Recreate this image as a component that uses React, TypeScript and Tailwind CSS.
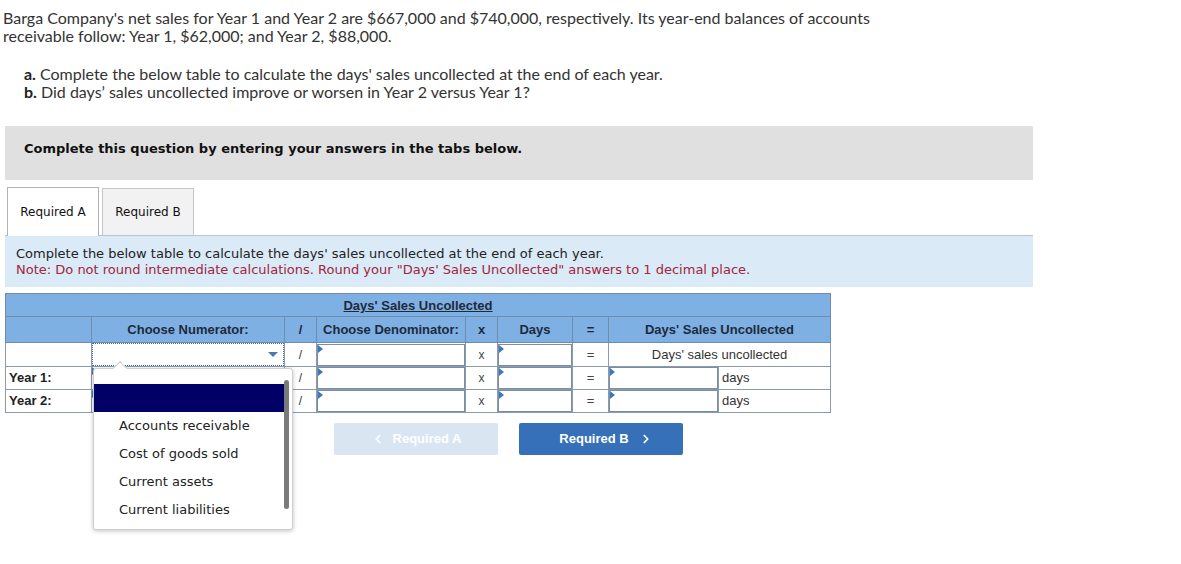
import { ChevronLeft, ChevronRight } from "lucide-react";

const SANS = "font-['Lato','Open_Sans',sans-serif]";
const VERD = "font-['DejaVu_Sans','Verdana',sans-serif]";
const ARIAL = "font-['Liberation_Sans','Arial',sans-serif]";

// little blue flag in the corner of an answer box
function Flag() {
  return (
    <span className="absolute left-0 top-0 h-0 w-0 border-y-[4px] border-l-[5px] border-y-transparent border-l-[#3b78c2]" />
  );
}

function AnswerBox() {
  return (
    <div className="relative h-[22px] border border-[#7a8ea6] bg-white">
      <Flag />
    </div>
  );
}

function Row({ label }: { label: string }) {
  return (
    <tr className="h-[23px]">
      <td className="border border-[#8c9aab] pl-[3px] text-[13px] font-bold text-[#222]">{label}</td>
      <td className="border border-[#8c9aab] p-0">
        <div className="relative h-[22px]">
          <Flag />
        </div>
      </td>
      <td className="border border-[#8c9aab] text-center text-[12px] text-[#333]">/</td>
      <td className="border border-[#8c9aab] p-0">
        <AnswerBox />
      </td>
      <td className="border border-[#8c9aab] text-center text-[12px] text-[#444]">x</td>
      <td className="border border-[#8c9aab] p-0">
        <AnswerBox />
      </td>
      <td className="border border-[#8c9aab] text-center text-[13px] text-[#444]">=</td>
      <td className="border border-[#8c9aab] p-0">
        <AnswerBox />
      </td>
      <td className="border border-[#8c9aab] pl-[3px] text-[13px] text-[#333]">days</td>
    </tr>
  );
}

export default function App() {
  return (
    <div className="relative h-[564px] w-[1181px] overflow-hidden bg-white text-[#222]">
      <div className={`${SANS} pl-[3px] pt-[9px] text-[16px] leading-[18px] text-[#333]`}>
        <p>
          Barga Company's net sales for Year 1 and Year 2 are $667,000 and $740,000, respectively. Its year-end balances of accounts
          <br />
          receivable follow: Year 1, $62,000; and Year 2, $88,000.
        </p>
        <div className="mt-[20px] pl-[21px]">
          <p>
            <b className="text-[#222]">a.</b> Complete the below table to calculate the days' sales uncollected at the end of each year.
          </p>
          <p>
            <b className="text-[#222]">b.</b> Did days’ sales uncollected improve or worsen in Year 2 versus Year 1?
          </p>
        </div>
      </div>

      <div className="mt-[25px] ml-[5px] w-[1028px]">
        <div className={`${VERD} h-[54px] bg-[#e0e0e0] pl-[19px] pt-[13px] text-[13px] font-bold text-[#111]`}>
          Complete this question by entering your answers in the tabs below.
        </div>

        <div className={`${VERD} mt-[6px] flex items-end gap-[3px] pl-[2px] text-[12px]`}>
          <div className="relative top-[1px] flex h-[49px] w-[92px] items-center justify-center border border-b-0 border-[#b3b3b3] bg-white text-[#111]">
            Required A
          </div>
          <div className="flex h-[47px] w-[92px] items-center justify-center border border-b-0 border-[#c6c6c6] bg-[#f2f2f2] text-[#111]">
            Required B
          </div>
        </div>

        <div className={`${VERD} h-[52px] border-t border-[#b8c4d0] bg-[#daeaf7] pl-[11px] pt-[10px] text-[13px] leading-[16px]`}>
          <p className="text-[#222]">Complete the below table to calculate the days' sales uncollected at the end of each year.</p>
          <p className="text-[#a0263c]">Note: Do not round intermediate calculations. Round your "Days' Sales Uncollected" answers to 1 decimal place.</p>
        </div>
      </div>

      <div className={`${ARIAL} ml-[5px] mt-[6px]`}>
        <table className="w-[825px] table-fixed border-collapse border border-[#6f8cad]">
          <colgroup>
            <col className="w-[86px]" />
            <col className="w-[193px]" />
            <col className="w-[32px]" />
            <col className="w-[149px]" />
            <col className="w-[32px]" />
            <col className="w-[75px]" />
            <col className="w-[36px]" />
            <col className="w-[110px]" />
            <col className="w-[112px]" />
          </colgroup>
          <thead>
            <tr className="h-[23px] bg-[#7fb0e4]">
              <th colSpan={9} className="pt-[2px] text-center text-[13px] font-bold text-[#1e2a3a] underline">
                Days' Sales Uncollected
              </th>
            </tr>
            <tr className="h-[26px] bg-[#7fb0e4] text-[13px] font-bold text-[#1e2a3a]">
              <th className="border border-[#6f8cad]"></th>
              <th className="border border-[#6f8cad] text-center">Choose Numerator:</th>
              <th className="border border-[#6f8cad] text-center">/</th>
              <th className="border border-[#6f8cad] text-center">Choose Denominator:</th>
              <th className="border border-[#6f8cad] text-center">x</th>
              <th className="border border-[#6f8cad] text-center">Days</th>
              <th className="border border-[#6f8cad] text-center">=</th>
              <th colSpan={2} className="border border-[#6f8cad] text-center">Days' Sales Uncollected</th>
            </tr>
          </thead>
          <tbody>
            <tr className="h-[24px]">
              <td className="border border-[#8c9aab]"></td>
              <td className="border border-[#8c9aab] p-0">
                <div className="flex h-[23px] items-center justify-end border border-dotted border-[#3f6e9e] pr-[5px]">
                  <span className="h-0 w-0 border-x-[5px] border-t-[5px] border-x-transparent border-t-[#4a78b0]" />
                </div>
              </td>
              <td className="border border-[#8c9aab] text-center text-[12px] text-[#333]">/</td>
              <td className="border border-[#8c9aab] p-0">
                <AnswerBox />
              </td>
              <td className="border border-[#8c9aab] text-center text-[12px] text-[#444]">x</td>
              <td className="border border-[#8c9aab] p-0">
                <AnswerBox />
              </td>
              <td className="border border-[#8c9aab] text-center text-[13px] text-[#444]">=</td>
              <td colSpan={2} className="border border-[#8c9aab] text-center text-[13px] text-[#333]">
                Days' sales uncollected
              </td>
            </tr>
            <Row label="Year 1:" />
            <Row label="Year 2:" />
          </tbody>
        </table>

        <div className="mt-[10px] flex gap-[21px] pl-[329px]">
          <button className="flex h-[32px] w-[164px] items-center justify-center gap-[8px] rounded-[2px] bg-[#dae5f2] text-[13px] font-bold text-white">
            <ChevronLeft size={14} strokeWidth={3} />
            Required A
          </button>
          <button className="flex h-[32px] w-[164px] items-center justify-center gap-[10px] rounded-[2px] bg-[#3670b8] pl-[10px] text-[13px] font-bold text-white">
            Required B
            <ChevronRight size={14} strokeWidth={3} />
          </button>
        </div>
      </div>

      {/* open select menu */}
      <div className={`${VERD} absolute left-[93px] top-[368px] h-[162px] w-[200px] rounded-[3px] border border-[#cfcfcf] bg-white shadow-[0_1px_4px_rgba(0,0,0,0.25)]`}>
        <span className="absolute left-[21px] top-[-6px] h-[10px] w-[10px] rotate-45 border-l border-t border-[#cfcfcf] bg-white" />
        <div className="relative mt-[15px] h-[28px] w-[191px] bg-[#000066]" />
        <ul className="text-[13px] leading-[28px] text-[#222]">
          <li className="pl-[25px]">Accounts receivable</li>
          <li className="pl-[25px]">Cost of goods sold</li>
          <li className="pl-[25px]">Current assets</li>
          <li className="pl-[25px]">Current liabilities</li>
        </ul>
        <span className="absolute right-[3px] top-[11px] h-[129px] w-[5px] rounded-full bg-[#7a7a7a]" />
      </div>
    </div>
  );
}
